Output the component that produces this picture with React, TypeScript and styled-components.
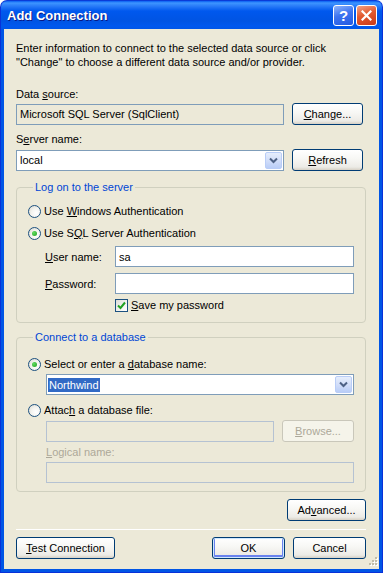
import * as React from 'react'
import styled, { createGlobalStyle } from 'styled-components'

const GlobalStyle = createGlobalStyle`
    html, body {
        margin: 0;
        padding: 0;
        background: #ffffff;
    }
    * {
        box-sizing: border-box;
    }
`

const font = `"Liberation Sans", Arial, sans-serif`

const Window = styled.div`
    width: 383px;
    height: 573px;
    display: flex;
    flex-direction: column;
    border: 1px solid #0831d9;
    border-top-color: #0a3bd8;
    border-radius: 7px 7px 0 0;
    background: linear-gradient(
        180deg,
        #0a5ff2 0px,
        #3d95ff 2px,
        #2a7cf8 5px,
        #0058ee 10px,
        #0054e3 20px,
        #0058ee 25px,
        #0055e5 29px,
        #0055e5 100%
    );
`

const TitleBar = styled.div`
    height: 28px;
    display: flex;
    align-items: center;
    padding: 0 5px 0 6px;
`

const Title = styled.div`
    flex: 1;
    color: #ffffff;
    font: bold 13px ${font};
    text-shadow: 1px 1px 0 #0a1883;
    padding-top: 1px;
`

const CaptionButton = styled.div<{ $kind: 'help' | 'close' }>`
    width: 21px;
    height: 21px;
    margin-left: 2px;
    border: 1px solid #ffffff;
    border-radius: 3px;
    display: flex;
    align-items: center;
    justify-content: center;
    color: #ffffff;
    font: bold 15px ${font};
    background: ${p =>
        p.$kind === 'help'
            ? 'linear-gradient(160deg, #8fb4fb 0%, #3d74f0 45%, #2259e2 100%)'
            : 'linear-gradient(160deg, #f2a285 0%, #e2592f 45%, #c8391a 100%)'};
`

const Client = styled.div`
    position: relative;
    flex: 1;
    margin: 0 3px 3px 3px;
    background: #ece9d8;
    padding: 0 13px 0 12px;
    display: flex;
    flex-direction: column;
    font: 11px ${font};
    color: #000000;
`

const Text = styled.div<{ $mt?: number; $muted?: boolean; $indent?: number }>`
    line-height: 14px;
    margin-top: ${p => p.$mt || 0}px;
    margin-left: ${p => p.$indent || 0}px;
    color: ${p => (p.$muted ? '#aca899' : '#000000')};
    white-space: nowrap;
`

const Row = styled.div<{ $mt?: number; $indent?: number; $gap?: number }>`
    display: flex;
    align-items: center;
    margin-top: ${p => p.$mt || 0}px;
    margin-left: ${p => p.$indent || 0}px;
    gap: ${p => p.$gap || 0}px;
`

const Field = styled.div<{ $tone?: 'normal' | 'readonly' | 'disabled'; $w?: number }>`
    height: 21px;
    ${p => (p.$w ? `width: ${p.$w}px;` : 'flex: 1;')}
    display: flex;
    align-items: center;
    padding: 0 1px 0 3px;
    border: 1px solid ${p => (p.$tone === 'disabled' ? '#b5c2d2' : '#7f9db9')};
    background: ${p => (p.$tone === 'normal' || !p.$tone ? '#ffffff' : '#ece9d8')};
    white-space: nowrap;
`

const FieldText = styled.span`
    flex: 1;
`

const Selected = styled.span`
    background: #316ac5;
    color: #ffffff;
    padding: 1px 1px;
    margin-left: -2px;
`

const DropArrow = styled.div`
    width: 17px;
    height: 17px;
    border: 1px solid #b9cdf7;
    border-radius: 2px;
    background: linear-gradient(180deg, #e6eefc 0%, #d2def9 50%, #b9cdf7 100%);
    display: flex;
    align-items: center;
    justify-content: center;
`

const Btn = styled.button<{ $w: number; $default?: boolean }>`
    width: ${p => p.$w}px;
    height: 22px;
    padding: 0;
    font: 11px ${font};
    color: #000000;
    border: 1px solid #003c74;
    border-radius: 3px;
    background: linear-gradient(180deg, #ffffff 0%, #f7f7f4 45%, #ecebe6 85%, #d6d0c5 100%);
    box-shadow: ${p => (p.$default ? 'inset 0 0 0 1px #cee7ff, inset 0 -1px 0 2px #6982ee' : 'none')};
    flex-shrink: 0;
    &:disabled {
        color: #aca899;
        border-color: #c9c7ba;
        background: #f5f4ea;
    }
`

const Group = styled.fieldset<{ $mt: number }>`
    margin: ${p => p.$mt}px 0 0 0;
    padding: 0 11px 0 11px;
    border: 1px solid #d0d0bf;
    border-radius: 4px;
    min-width: 0;
`

const Legend = styled.legend`
    margin-left: 5px;
    padding: 0 2px;
    line-height: 14px;
    color: #0046d5;
`

const Radio = styled.span<{ $on?: boolean }>`
    width: 13px;
    height: 13px;
    border-radius: 50%;
    border: 1px solid #1c5180;
    background: radial-gradient(circle at 65% 65%, #ffffff 0%, #f4f4f0 45%, #d7d5cb 100%);
    margin-right: 3px;
    display: flex;
    align-items: center;
    justify-content: center;
    &::after {
        content: '';
        width: 5px;
        height: 5px;
        border-radius: 50%;
        background: ${p => (p.$on ? 'radial-gradient(circle at 35% 35%, #61dc61, #21a121)' : 'transparent')};
    }
`

const Check = styled.span`
    width: 13px;
    height: 13px;
    border: 1px solid #1c5180;
    background: linear-gradient(135deg, #dcdcd7 0%, #f4f4f0 60%, #ffffff 100%);
    margin-right: 3px;
    display: flex;
    align-items: center;
    justify-content: center;
`

const Label = styled.span<{ $w?: number }>`
    ${p => (p.$w ? `width: ${p.$w}px;` : '')}
    flex-shrink: 0;
    line-height: 16px;
`

const Separator = styled.div`
    height: 1px;
    margin-top: 8px;
    background: #d0d0bf;
    border-bottom: 1px solid #ffffff;
`

const ButtonBar = styled.div`
    display: flex;
    margin-top: 7px;
    gap: 8px;
`

const Spacer = styled.div`
    flex: 1;
`

const Grip = styled.svg`
    position: absolute;
    right: 1px;
    bottom: 1px;
`

function Arrow(): JSX.Element {
    return (
        <DropArrow>
            <svg width="9" height="7" viewBox="0 0 9 7">
                <path d="M1 1.5 L4.5 5 L8 1.5" fill="none" stroke="#4d6185" strokeWidth="2" />
            </svg>
        </DropArrow>
    )
}

export default function App(): JSX.Element {
    return (
        <>
            <GlobalStyle />
            <Window>
                <TitleBar>
                    <Title>Add Connection</Title>
                    <CaptionButton $kind="help">?</CaptionButton>
                    <CaptionButton $kind="close">
                        <svg width="11" height="11" viewBox="0 0 11 11">
                            <path d="M1.5 1.5 L9.5 9.5 M9.5 1.5 L1.5 9.5" stroke="#ffffff" strokeWidth="2.2" strokeLinecap="square" />
                        </svg>
                    </CaptionButton>
                </TitleBar>
                <Client>
                    <Text $mt={12}>
                        Enter information to connect to the selected data source or click
                        <br />
                        "Change" to choose a different data source and/or provider.
                    </Text>

                    <Text $mt={18}>
                        Data <u>s</u>ource:
                    </Text>
                    <Row $mt={2} $gap={8}>
                        <Field $tone="readonly">Microsoft SQL Server (SqlClient)</Field>
                        <Btn $w={71} style={{ marginRight: 3 }}>
                            <u>C</u>hange...
                        </Btn>
                    </Row>

                    <Text $mt={7}>
                        S<u>e</u>rver name:
                    </Text>
                    <Row $mt={3} $gap={8}>
                        <Field>
                            <FieldText>local</FieldText>
                            <Arrow />
                        </Field>
                        <Btn $w={71} style={{ marginRight: 3 }}>
                            <u>R</u>efresh
                        </Btn>
                    </Row>

                    <Group $mt={9}>
                        <Legend>Log on to the server</Legend>
                        <Row $mt={9}>
                            <Radio />
                            <Label>
                                Use <u>W</u>indows Authentication
                            </Label>
                        </Row>
                        <Row $mt={6}>
                            <Radio $on />
                            <Label>
                                Use S<u>Q</u>L Server Authentication
                            </Label>
                        </Row>
                        <Row $mt={5} $indent={17}>
                            <Label $w={70}>
                                <u>U</u>ser name:
                            </Label>
                            <Field>sa</Field>
                        </Row>
                        <Row $mt={6} $indent={17}>
                            <Label $w={70}>
                                <u>P</u>assword:
                            </Label>
                            <Field />
                        </Row>
                        <Row $mt={3} $indent={87} style={{ marginBottom: 9 }}>
                            <Check>
                                <svg width="9" height="9" viewBox="0 0 9 9">
                                    <path d="M1 4.5 L3.5 7 L8 1.5" fill="none" stroke="#21a121" strokeWidth="2" />
                                </svg>
                            </Check>
                            <Label>
                                <u>S</u>ave my password
                            </Label>
                        </Row>
                    </Group>

                    <Group $mt={7}>
                        <Legend>Connect to a database</Legend>
                        <Row $mt={12}>
                            <Radio $on />
                            <Label>
                                Select or enter a <u>d</u>atabase name:
                            </Label>
                        </Row>
                        <Row $mt={2} $indent={18}>
                            <Field>
                                <FieldText>
                                    <Selected>Northwind</Selected>
                                </FieldText>
                                <Arrow />
                            </Field>
                        </Row>
                        <Row $mt={7}>
                            <Radio />
                            <Label>
                                Attac<u>h</u> a database file:
                            </Label>
                        </Row>
                        <Row $mt={2} $indent={18} $gap={8}>
                            <Field $tone="disabled" />
                            <Btn $w={72} disabled>
                                <u>B</u>rowse...
                            </Btn>
                        </Row>
                        <Text $mt={3} $indent={18} $muted>
                            <u>L</u>ogical name:
                        </Text>
                        <Row $mt={3} $indent={18} style={{ marginBottom: 8 }}>
                            <Field $tone="disabled" />
                        </Row>
                    </Group>

                    <Row $mt={7}>
                        <Spacer />
                        <Btn $w={79}>
                            Ad<u>v</u>anced...
                        </Btn>
                    </Row>
                    <Separator />
                    <ButtonBar>
                        <Btn $w={99}>
                            <u>T</u>est Connection
                        </Btn>
                        <Spacer />
                        <Btn $w={73} $default>
                            OK
                        </Btn>
                        <Btn $w={73}>Cancel</Btn>
                    </ButtonBar>

                    <Grip width="12" height="12" viewBox="0 0 12 12">
                        {[
                            [9, 1],
                            [6, 4],
                            [9, 4],
                            [3, 7],
                            [6, 7],
                            [9, 7],
                        ].map(([x, y]) => (
                            <g key={`${x}-${y}`}>
                                <rect x={x + 1} y={y + 1} width="2" height="2" fill="#ffffff" />
                                <rect x={x} y={y} width="2" height="2" fill="#c1bdaa" />
                            </g>
                        ))}
                    </Grip>
                </Client>
            </Window>
        </>
    )
}
